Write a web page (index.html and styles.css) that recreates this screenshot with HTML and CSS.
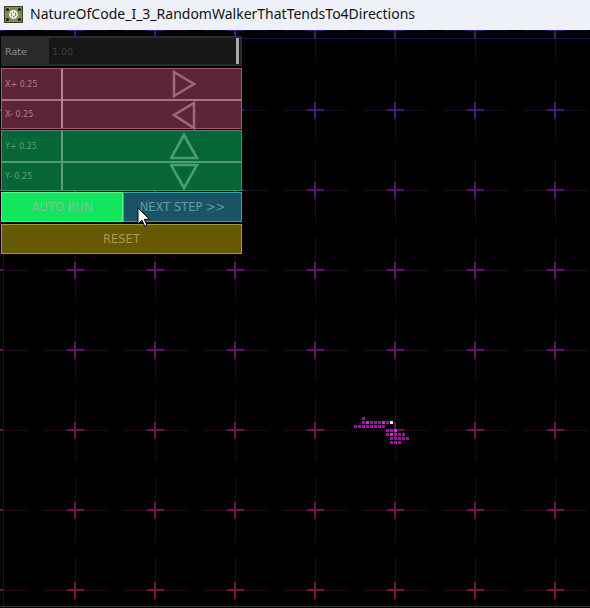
FILE: index.html
```html
<!DOCTYPE html>
<html>
<head>
<meta charset="utf-8">
<link rel="stylesheet" href="styles.css">
</head>
<body>
<div class="titlebar">
  <svg class="appicon" width="19" height="17" viewBox="0 0 19 17">
    <rect x="0.5" y="0.5" width="18" height="16" fill="#7f8a55" stroke="#3a3d2c"/>
    <circle cx="3.5" cy="3.5" r="1.6" fill="#1d1f16"/>
    <circle cx="15.5" cy="3.5" r="1.6" fill="#1d1f16"/>
    <circle cx="3.5" cy="13.5" r="1.6" fill="#1d1f16"/>
    <circle cx="15.5" cy="13.5" r="1.6" fill="#1d1f16"/>
    <circle cx="9.5" cy="8.5" r="4.4" fill="#f2f2ea"/>
    <circle cx="9.5" cy="8.5" r="2.2" fill="none" stroke="#6f6f64" stroke-width="1.4" stroke-dasharray="1.2 1"/>
  </svg>
  <span class="title">NatureOfCode_I_3_RandomWalkerThatTendsTo4Directions</span>
</div>
<div class="canvas">
  <svg class="grid" width="590" height="578" viewBox="0 0 590 578">
    <defs>
      <linearGradient id="g" x1="0" y1="0" x2="0" y2="578" gradientUnits="userSpaceOnUse">
        <stop offset="0" stop-color="#421878"/>
        <stop offset="0.5" stop-color="#5c1862"/>
        <stop offset="1" stop-color="#781640"/>
      </linearGradient>
      <pattern id="p" x="35" y="-40" width="80" height="80" patternUnits="userSpaceOnUse">
        <rect x="8" y="40" width="64" height="1" fill="#fff" fill-opacity="0.36"/>
        <rect x="40" y="8" width="1" height="64" fill="#fff" fill-opacity="0.36"/>
        <rect x="32" y="39" width="17" height="2" fill="#fff"/>
        <rect x="39" y="32" width="2" height="17" fill="#fff"/>
      </pattern>
      <mask id="m">
        <rect width="590" height="578" fill="url(#p)"/>
      </mask>
    </defs>
    <rect width="590" height="578" fill="url(#g)" mask="url(#m)"/>
    <rect x="0" y="8" width="590" height="1" fill="#26104e"/>
    <rect x="3" y="8" width="1" height="570" fill="#1e0e44"/>
    <rect x="0" y="576" width="590" height="1" fill="#34343c"/>
    <g fill="#a010a4">
      <rect x="362" y="387" width="3" height="3"/>
      <rect x="362" y="391" width="3" height="3"/><rect x="366" y="391" width="3" height="3"/><rect x="370" y="391" width="3" height="3"/><rect x="374" y="391" width="3" height="3"/><rect x="378" y="391" width="3" height="3"/><rect x="382" y="391" width="3" height="3"/><rect x="386" y="391" width="3" height="3"/>
      <rect x="354" y="395" width="3" height="3"/><rect x="358" y="395" width="3" height="3"/><rect x="362" y="395" width="3" height="3"/><rect x="366" y="395" width="3" height="3"/><rect x="370" y="395" width="3" height="3"/><rect x="374" y="395" width="3" height="3"/><rect x="378" y="395" width="3" height="3"/><rect x="382" y="395" width="3" height="3"/>
      <rect x="386" y="399" width="3" height="3"/><rect x="390" y="399" width="3" height="3"/><rect x="394" y="399" width="3" height="3"/>
      <rect x="386" y="403" width="3" height="3"/><rect x="390" y="403" width="3" height="3"/><rect x="394" y="403" width="3" height="3"/><rect x="398" y="403" width="3" height="3"/><rect x="402" y="403" width="3" height="3"/>
      <rect x="390" y="407" width="3" height="3"/><rect x="394" y="407" width="3" height="3"/><rect x="398" y="407" width="3" height="3"/><rect x="402" y="407" width="3" height="3"/><rect x="406" y="407" width="3" height="3"/>
      <rect x="390" y="411" width="3" height="3"/><rect x="394" y="411" width="3" height="3"/><rect x="398" y="411" width="3" height="3"/>
    </g>
    <g fill="#d828dc">
      <rect x="366" y="391" width="3" height="3"/><rect x="382" y="391" width="3" height="3"/><rect x="390" y="403" width="3" height="3"/><rect x="394" y="399" width="3" height="3"/>
    </g>
    <rect x="390" y="391" width="3" height="3" fill="#f4e8f4"/>
  </svg>

  <div class="panel">
    <div class="rate">
      <span class="rate-label">Rate</span>
      <div class="rate-field">
        <span class="rate-value">1.00</span>
        <span class="rate-handle"></span>
      </div>
    </div>

    <div class="group group-x">
      <div class="srow">
        <span class="slabel">X+ 0.25</span>
        <svg class="tri" width="30" height="30" viewBox="0 0 30 30">
          <polygon points="4,3 24,15 4,27" fill="none" stroke="#a3647d" stroke-width="2.6"/>
        </svg>
      </div>
      <div class="srow">
        <span class="slabel">X- 0.25</span>
        <svg class="tri" width="30" height="30" viewBox="0 0 30 30">
          <polygon points="24,3 4,15 24,28" fill="none" stroke="#a3647d" stroke-width="2.6"/>
        </svg>
      </div>
      <span class="sline"></span>
    </div>

    <div class="group group-y">
      <div class="srow">
        <span class="slabel">Y+ 0.25</span>
        <svg class="tri" width="30" height="30" viewBox="0 0 30 30">
          <polygon points="14,4 27,27 1,27" fill="none" stroke="#4c9c72" stroke-width="2.6"/>
        </svg>
      </div>
      <div class="srow">
        <span class="slabel">Y- 0.25</span>
        <svg class="tri" width="30" height="30" viewBox="0 0 30 30">
          <polygon points="1,3 27,3 14,26" fill="none" stroke="#4c9c72" stroke-width="2.6"/>
        </svg>
      </div>
      <span class="sline"></span>
    </div>

    <div class="buttons">
      <div class="btn btn-auto">AUTO RUN</div>
      <div class="btn btn-next">NEXT STEP &gt;&gt;</div>
    </div>
    <div class="btn btn-reset">RESET</div>
  </div>

  <svg class="cursor" width="14" height="22" viewBox="0 0 14 22">
    <path d="M1,1 L1,17 L5,13.2 L7.8,19.5 L10,18.5 L7.3,12.3 L12.5,12.3 Z" fill="#fff" stroke="#000" stroke-width="1" stroke-linejoin="round"/>
  </svg>
</div>
</body>
</html>
```

FILE: styles.css
```css
* { box-sizing: border-box; }
html, body {
  margin: 0;
  padding: 0;
  background: #000;
  width: 590px;
  height: 608px;
  overflow: hidden;
}
.titlebar {
  height: 30px;
  background: #eef2f8;
  display: flex;
  align-items: center;
  padding-left: 4px;
  gap: 7px;
}
.appicon { display: block; margin-top: -2px; }
.title {
  font-family: "Noto Sans", "Open Sans", sans-serif;
  font-size: 14px;
  color: #111;
  white-space: nowrap;
  margin-top: -3px;
}
.canvas {
  position: relative;
  width: 590px;
  height: 578px;
  background: #000;
}
.grid { position: absolute; left: 0; top: 0; display: block; }
.panel {
  position: absolute;
  left: 1px;
  top: 6px;
  width: 241px;
  display: flex;
  flex-direction: column;
  gap: 2px;
  font-family: "DejaVu Sans", sans-serif;
}
.rate {
  height: 30px;
  background: #2b2b2b;
  display: flex;
  align-items: center;
  padding: 2px 2px 2px 0;
}
.rate-label {
  width: 48px;
  padding-left: 4px;
  font-size: 9.5px;
  color: #8e8e8e;
}
.rate-field {
  flex: 1;
  height: 26px;
  background: #171717;
  display: flex;
  align-items: center;
  justify-content: space-between;
  padding-left: 3px;
}
.rate-value { font-size: 9.5px; color: #3e3e3e; }
.rate-handle {
  width: 3px;
  height: 26px;
  background: #a8a8a8;
  margin-right: 1px;
}
.group {
  position: relative;
  display: flex;
  flex-direction: column;
  border: 1px solid;
}
.group-x { background: #5e2539; border-color: #9c5874; }
.group-y { background: #076637; border-color: #3c9662; margin-top: -1px; }
.srow {
  height: 30px;
  display: flex;
  align-items: center;
  position: relative;
}
.srow + .srow { border-top: 2px solid; height: 29px; }
.group-x .srow + .srow { border-top-color: #a8748a; }
.group-y .srow + .srow { border-top-color: #4e9c72; }
.slabel {
  font-size: 8px;
  padding-left: 3px;
  width: 60px;
}
.group-x .slabel { color: #b07c92; }
.group-y .slabel { color: #5e9e76; }
.tri {
  display: block;
  margin-left: 108px;
}
.sline {
  position: absolute;
  left: 59px;
  top: 0;
  bottom: 0;
  width: 2px;
}
.group-x .sline { background: #b0889a; }
.group-y .sline { background: #5e9c7a; }
.buttons {
  display: flex;
  height: 30px;
  margin-top: -1px;
}
.btn {
  height: 30px;
  display: flex;
  align-items: center;
  justify-content: center;
  font-size: 11.5px;
  border: 1px solid;
}
.btn-auto {
  width: 122px;
  background: #14e55f;
  border-color: #5af08e;
  color: #7bc48e;
}
.btn-next {
  flex: 1;
  background: #1b5465;
  border-color: #3f9cbc;
  color: #5d9aae;
}
.btn-reset {
  background: #655a03;
  border-color: #a99a2a;
  color: #a99858;
}
.cursor {
  position: absolute;
  left: 137px;
  top: 177px;
}
```
